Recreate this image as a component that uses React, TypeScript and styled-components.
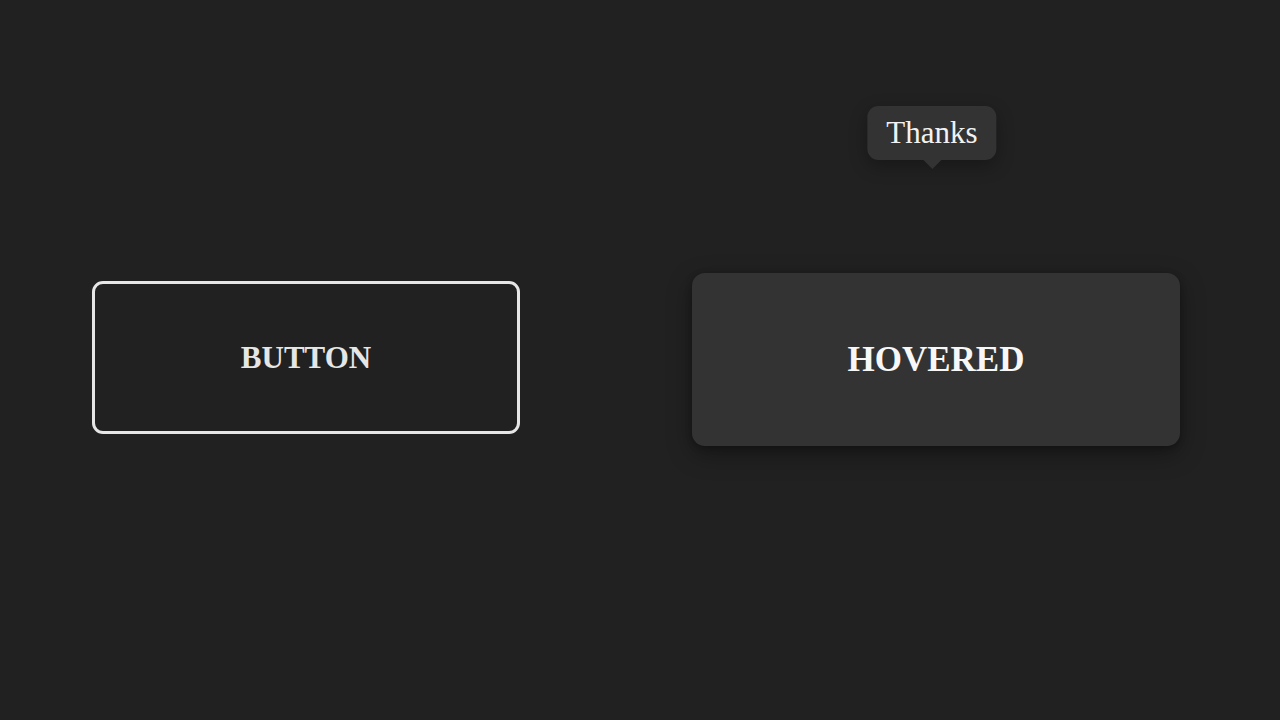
import React from "react";
import styled, { createGlobalStyle } from "styled-components";

const Global = createGlobalStyle`
  html, body { margin: 0; padding: 0; background: #212121; }
  body { font-family: "Liberation Serif", "Times New Roman", serif; }
`;

const Page = styled.div`
  height: 720px;
  display: flex;
  align-items: center;
  padding-left: 92px;
  gap: 172px;
  box-sizing: border-box;
`;

const OutlineButton = styled.button`
  width: 428px;
  height: 153px;
  margin-top: -5px;
  box-sizing: border-box;
  background: transparent;
  border: 3px solid #e6e6e6;
  border-radius: 11px;
  color: #e6e6e6;
  font-family: "Liberation Serif", "Times New Roman", serif;
  font-weight: 700;
  font-size: 31px;
  letter-spacing: 0;
  padding: 0;
`;

const HoverWrap = styled.div`
  position: relative;
  margin-top: -1px;
`;

const FilledButton = styled.button`
  width: 488px;
  height: 173px;
  box-sizing: border-box;
  background: #333333;
  border: none;
  border-radius: 13px;
  color: #f7f7f7;
  font-family: "Liberation Serif", "Times New Roman", serif;
  font-weight: 700;
  font-size: 35px;
  padding: 0;
  box-shadow: 0 8px 24px rgba(0, 0, 0, 0.35), 0 2px 6px rgba(0, 0, 0, 0.25);
`;

const Tooltip = styled.div`
  position: absolute;
  left: 50%;
  bottom: calc(100% + 113px);
  transform: translateX(calc(-50% - 4px));
  background: #333333;
  color: #f2f2f2;
  font-family: "Liberation Serif", "Times New Roman", serif;
  font-size: 31px;
  line-height: 54px;
  height: 54px;
  padding: 0 19px;
  border-radius: 11px;
  white-space: nowrap;
  box-shadow: 0 6px 18px rgba(0, 0, 0, 0.3);

  &::after {
    content: "";
    position: absolute;
    left: 50%;
    top: 100%;
    transform: translateX(-50%);
    border-left: 9px solid transparent;
    border-right: 9px solid transparent;
    border-top: 9px solid #333333;
  }
`;

export default function App() {
  return (
    <>
      <Global />
      <Page>
        <OutlineButton>BUTTON</OutlineButton>
        <HoverWrap>
          <Tooltip>Thanks</Tooltip>
          <FilledButton>HOVERED</FilledButton>
        </HoverWrap>
      </Page>
    </>
  );
}
